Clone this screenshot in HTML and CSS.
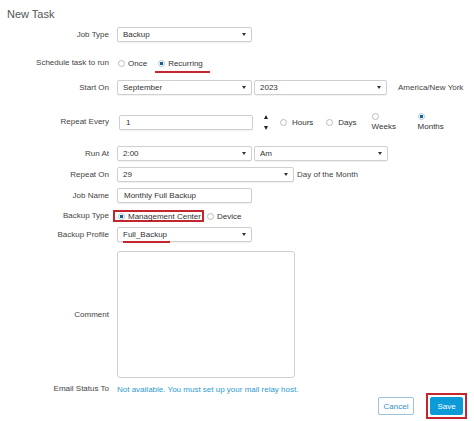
FILE: index.html
```html
<!DOCTYPE html>
<html>
<head>
<meta charset="utf-8">
<title>New Task</title>
<link rel="stylesheet" href="styles.css">
</head>
<body>
<div class="page">
  <h1 class="title">New Task</h1>
  <div class="form">
    <div class="row r1">
      <div class="label">Job Type</div>
      <div class="field"><div class="select w135">Backup<span class="caret"></span></div></div>
    </div>
    <div class="row r2">
      <div class="label">Schedule task to run</div>
      <div class="field">
        <span class="radio first"></span><span class="opt">Once</span>
        <span class="marked"><span class="radio on"></span><span class="opt">Recurring</span></span>
      </div>
    </div>
    <div class="row r3">
      <div class="label">Start On</div>
      <div class="field">
        <div class="select w135">September<span class="caret"></span></div>
        <div class="select w133 next">2023<span class="caret"></span></div>
        <span class="tz">America/New York</span>
      </div>
    </div>
    <div class="row r4">
      <div class="label">Repeat Every</div>
      <div class="field">
        <div class="input w134 shift">1</div>
        <div class="spinner"><span class="up"></span><span class="down"></span></div>
        <span class="radio hours"></span><span class="opt o5">Hours</span>
        <span class="radio days"></span><span class="opt o5">Days</span>
        <span class="stack weeks"><span class="radio"></span><span>Weeks</span></span>
        <span class="stack"><span class="radio on"></span><span>Months</span></span>
      </div>
    </div>
    <div class="row r5">
      <div class="label">Run At</div>
      <div class="field">
        <div class="select w135">2:00<span class="caret"></span></div>
        <div class="select w134 next">Am<span class="caret"></span></div>
      </div>
    </div>
    <div class="row r6">
      <div class="label">Repeat On</div>
      <div class="field">
        <div class="select w177">29<span class="caret"></span></div>
        <span class="suffix">Day of the Month</span>
      </div>
    </div>
    <div class="row r7">
      <div class="label">Job Name</div>
      <div class="field"><div class="input w135">Monthly Full Backup</div></div>
    </div>
    <div class="row r8">
      <div class="label">Backup Type</div>
      <div class="field">
        <span class="boxed"><span class="radio on"></span><span class="opt">Management Center</span></span>
        <span class="radio device"></span><span class="opt">Device</span>
      </div>
    </div>
    <div class="row r9">
      <div class="label">Backup Profile</div>
      <div class="field"><div class="select w135"><span class="underlined">Full_Backup</span><span class="caret"></span></div></div>
    </div>
    <div class="row r10">
      <div class="label">Comment</div>
      <div class="field"><div class="textarea"></div></div>
    </div>
    <div class="row r11">
      <div class="label">Email Status To</div>
      <div class="field"><span class="note">Not available. You must set up your mail relay host.</span></div>
    </div>
    <div class="actions">
      <button class="btn cancel">Cancel</button>
      <span class="highlight"><button class="btn save">Save</button></span>
    </div>
  </div>
</div>
</body>
</html>
```

FILE: styles.css
```css
* { box-sizing: border-box; }
html, body { margin: 0; padding: 0; background: #fff; }
body {
  font-family: "Liberation Sans", Arial, sans-serif;
  font-size: 8px;
  color: #333;
}
.page { width: 474px; height: 421px; overflow: hidden; }
.title {
  margin: 0;
  padding: 8px 0 0 7px;
  height: 21px;
  font-size: 11px;
  line-height: 13px;
  font-weight: normal;
  color: #555;
}
.form { display: flex; flex-direction: column; }
.row {
  display: grid;
  grid-template-columns: 109px 1fr;
  column-gap: 8px;
  align-items: center;
}
.label { text-align: right; color: #444; white-space: nowrap; line-height: 10px; }
.field { display: flex; align-items: center; height: 100%; white-space: nowrap; }

.r1 { margin-top: 6px; height: 15px; }
.r2 { margin-top: 13px; height: 16px; }
.r3 { margin-top: 9px; height: 15px; }
.r4 { margin-top: 18px; height: 18px; }
.r5 { margin-top: 15px; height: 15px; }
.r6 { margin-top: 6px; height: 15px; }
.r7 { margin-top: 6px; height: 15px; }
.r8 { margin-top: 7px; height: 12px; }
.r9 { margin-top: 5px; height: 15px; }
.r10 { margin-top: 9px; height: 127px; }
.r11 { margin-top: 6px; height: 10px; }

.select, .input {
  height: 15px;
  border: 1px solid #cfcfcf;
  border-radius: 2px;
  background: #fff;
  box-shadow: 0 1px 1px rgba(0,0,0,0.06);
  display: flex;
  align-items: center;
  padding-left: 5px;
  line-height: 13px;
  color: #333;
  position: relative;
}
.input { padding-left: 6px; }
.w135 { width: 135px; }
.w134 { width: 134px; }
.w133 { width: 133px; }
.w177 { width: 177px; }
.next { margin-left: 2px; }
.shift { margin-left: 2px; }
.caret {
  margin-left: auto;
  margin-right: 5px;
  width: 0; height: 0;
  border-left: 2px solid transparent;
  border-right: 2px solid transparent;
  border-top: 3px solid #333;
}
.tz { margin-left: 11px; color: #444; }
.suffix { margin-left: 3px; color: #444; }

.radio {
  display: inline-block;
  flex: none;
  width: 7px; height: 7px;
  border: 1px solid #bbb;
  border-radius: 50%;
  background: #fff;
}
.radio.on {
  border-color: #a9c9dc;
  background: radial-gradient(circle, #1f5e86 0 1.6px, #fff 2px);
}
.radio.first { margin-left: 1px; }
.opt { margin-left: 3px; color: #333; }
.o5 { margin-left: 5px; }
.marked { display: inline-flex; align-items: center; margin-left: 11px; position: relative; }
.marked::after {
  content: "";
  position: absolute;
  left: -3px; right: -7px;
  bottom: -5px;
  height: 2px;
  background: #c4262e;
}

.spinner {
  margin-left: 10px;
  height: 15px;
  width: 5px;
  display: flex;
  flex-direction: column;
  justify-content: space-between;
  align-items: center;
}
.spinner .up {
  width: 0; height: 0;
  border-left: 2px solid transparent;
  border-right: 2px solid transparent;
  border-bottom: 4px solid #222;
}
.spinner .down {
  width: 0; height: 0;
  border-left: 2px solid transparent;
  border-right: 2px solid transparent;
  border-top: 4px solid #222;
}
.radio.hours { margin-left: 12px; }
.radio.days { margin-left: 13px; }
.stack {
  display: flex;
  flex-direction: column;
  align-items: flex-start;
  gap: 2px;
  line-height: 9px;
  color: #333;
}
.stack.weeks { margin-left: 15px; width: 46px; }

.boxed {
  display: inline-flex;
  align-items: center;
  margin-left: -4px;
  height: 12px;
  border: 2px solid #c4262e;
  padding: 0 1px 0 3px;
}
.radio.device { margin-left: 3px; }

.underlined { position: relative; }
.underlined::after {
  content: "";
  position: absolute;
  left: 0; right: -3px;
  bottom: -2px;
  height: 2px;
  background: #c4262e;
}

.textarea {
  width: 178px;
  height: 127px;
  border: 1px solid #cfcfcf;
  border-radius: 3px;
  background: #fff;
}
.note { color: #2f9bd0; }

.actions {
  margin-top: 3px;
  height: 18px;
  display: flex;
  align-items: center;
  justify-content: flex-end;
  padding-right: 7px;
}
.btn {
  font-family: "Liberation Sans", Arial, sans-serif;
  font-size: 8px;
  height: 18px;
  padding: 0;
  border-radius: 2px;
  cursor: pointer;
}
.cancel {
  width: 36px;
  background: #fff;
  border: 1px solid #9cc3da;
  color: #3a8fc2;
}
.highlight {
  display: flex;
  margin-left: 12px;
  padding: 2px;
  border: 2px solid #c4262e;
}
.save {
  width: 33px;
  display: block;
  background: #0d9bd7;
  border: 1px solid #0d9bd7;
  color: #fff;
}
```
